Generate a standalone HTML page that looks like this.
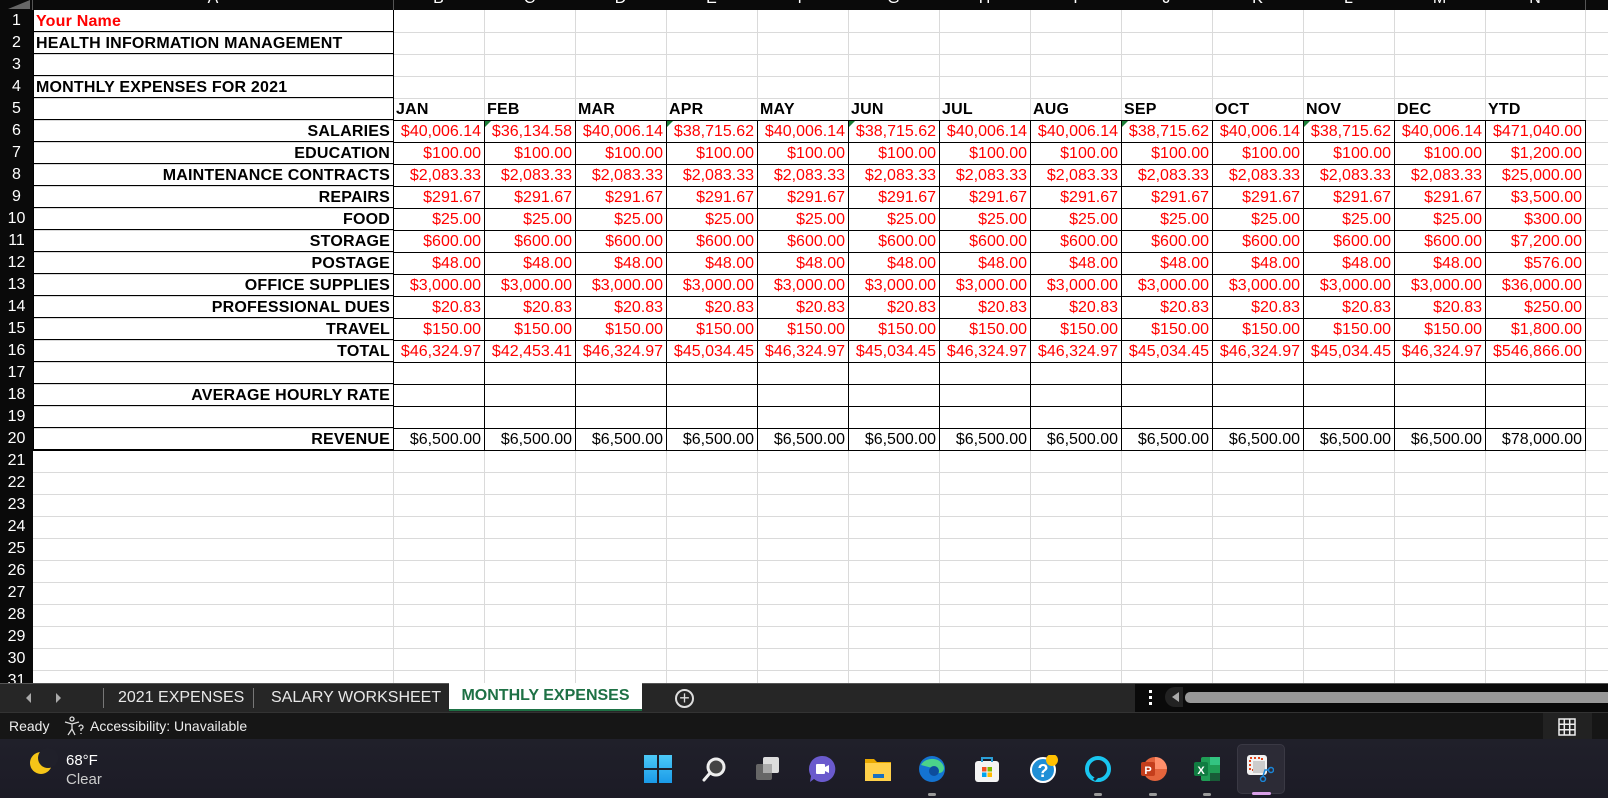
<!DOCTYPE html>
<html><head><meta charset="utf-8"><style>
*{margin:0;padding:0;box-sizing:border-box}
body{width:1608px;height:798px;overflow:hidden;background:#fff;font-family:"Liberation Sans",Arial,sans-serif;position:relative}
.abs{position:absolute}
.vl{position:absolute;width:1px;background:#dadada}
.bv{position:absolute;width:1px;background:#000}
#grid{position:absolute;left:33px;top:11px;width:1575px;height:672px;background:repeating-linear-gradient(to bottom,transparent 0 21px,#dadada 21px 22px)}
table{position:absolute;left:33px;top:10px;border-collapse:collapse;table-layout:fixed;font-size:16px}
tr{height:22px}
td{padding:2px 3px 0 3px;white-space:nowrap;overflow:hidden;line-height:20px}
td.r{text-align:right;color:#f00}
td.k{color:#000}
td.b{font-weight:bold;letter-spacing:0.2px}
.rn{position:absolute;left:0;width:33px;height:22px;color:#fff;font-size:16px;text-align:center;line-height:22px}
.ch{position:absolute;top:-11px;color:#fff;font-size:16px;text-align:center;line-height:20px}
.tri{position:absolute;width:0;height:0;border-top:6px solid #1a7f37;border-right:6px solid transparent}
.tb{position:absolute;top:755px;width:28px;height:28px}
.dot{position:absolute;top:793px;width:8px;height:3px;border-radius:2px;background:#9a9a9a}
</style></head><body>
<div id="grid"></div>
<div class="vl" style="left:393px;top:10px;height:673px"></div>
<div class="vl" style="left:484px;top:10px;height:673px"></div>
<div class="vl" style="left:575px;top:10px;height:673px"></div>
<div class="vl" style="left:666px;top:10px;height:673px"></div>
<div class="vl" style="left:757px;top:10px;height:673px"></div>
<div class="vl" style="left:848px;top:10px;height:673px"></div>
<div class="vl" style="left:939px;top:10px;height:673px"></div>
<div class="vl" style="left:1030px;top:10px;height:673px"></div>
<div class="vl" style="left:1121px;top:10px;height:673px"></div>
<div class="vl" style="left:1212px;top:10px;height:673px"></div>
<div class="vl" style="left:1303px;top:10px;height:673px"></div>
<div class="vl" style="left:1394px;top:10px;height:673px"></div>
<div class="vl" style="left:1485px;top:10px;height:673px"></div>
<div class="vl" style="left:1585px;top:10px;height:673px"></div>
<div class="abs" style="left:33px;top:10px;width:361px;height:441px;border:1px solid #000;border-top:none;background:repeating-linear-gradient(to bottom,transparent 0 21px,#000 21px 22px)"></div>
<div class="abs" style="left:393px;top:120px;width:1193px;height:331px;border:1px solid #000;background:repeating-linear-gradient(to bottom,transparent 0 21px,#000 21px 22px)"></div>
<div class="bv" style="left:484px;top:120px;height:331px"></div>
<div class="bv" style="left:575px;top:120px;height:331px"></div>
<div class="bv" style="left:666px;top:120px;height:331px"></div>
<div class="bv" style="left:757px;top:120px;height:331px"></div>
<div class="bv" style="left:848px;top:120px;height:331px"></div>
<div class="bv" style="left:939px;top:120px;height:331px"></div>
<div class="bv" style="left:1030px;top:120px;height:331px"></div>
<div class="bv" style="left:1121px;top:120px;height:331px"></div>
<div class="bv" style="left:1212px;top:120px;height:331px"></div>
<div class="bv" style="left:1303px;top:120px;height:331px"></div>
<div class="bv" style="left:1394px;top:120px;height:331px"></div>
<div class="bv" style="left:1485px;top:120px;height:331px"></div>
<div class="tri" style="left:485px;top:121px"></div>
<div class="tri" style="left:667px;top:121px"></div>
<div class="tri" style="left:849px;top:121px"></div>
<div class="tri" style="left:1122px;top:121px"></div>
<div class="tri" style="left:1304px;top:121px"></div>

<table>
<colgroup><col style="width:360px"><col style="width:91px"><col style="width:91px"><col style="width:91px"><col style="width:91px"><col style="width:91px"><col style="width:91px"><col style="width:91px"><col style="width:91px"><col style="width:91px"><col style="width:91px"><col style="width:91px"><col style="width:91px"><col style="width:100px"></colgroup>
<tr><td class="b" style="color:#f00">Your Name</td><td colspan="13"></td></tr>
<tr><td class="b">HEALTH INFORMATION MANAGEMENT</td><td colspan="13"></td></tr>
<tr><td></td><td colspan="13"></td></tr>
<tr><td class="b">MONTHLY EXPENSES FOR 2021</td><td colspan="13"></td></tr>
<tr><td></td><td class="b">JAN</td><td class="b">FEB</td><td class="b">MAR</td><td class="b">APR</td><td class="b">MAY</td><td class="b">JUN</td><td class="b">JUL</td><td class="b">AUG</td><td class="b">SEP</td><td class="b">OCT</td><td class="b">NOV</td><td class="b">DEC</td><td class="b">YTD</td></tr>
<tr><td class="b" style="text-align:right">SALARIES</td><td class="r">$40,006.14</td><td class="r">$36,134.58</td><td class="r">$40,006.14</td><td class="r">$38,715.62</td><td class="r">$40,006.14</td><td class="r">$38,715.62</td><td class="r">$40,006.14</td><td class="r">$40,006.14</td><td class="r">$38,715.62</td><td class="r">$40,006.14</td><td class="r">$38,715.62</td><td class="r">$40,006.14</td><td class="r">$471,040.00</td></tr>
<tr><td class="b" style="text-align:right">EDUCATION</td><td class="r">$100.00</td><td class="r">$100.00</td><td class="r">$100.00</td><td class="r">$100.00</td><td class="r">$100.00</td><td class="r">$100.00</td><td class="r">$100.00</td><td class="r">$100.00</td><td class="r">$100.00</td><td class="r">$100.00</td><td class="r">$100.00</td><td class="r">$100.00</td><td class="r">$1,200.00</td></tr>
<tr><td class="b" style="text-align:right">MAINTENANCE CONTRACTS</td><td class="r">$2,083.33</td><td class="r">$2,083.33</td><td class="r">$2,083.33</td><td class="r">$2,083.33</td><td class="r">$2,083.33</td><td class="r">$2,083.33</td><td class="r">$2,083.33</td><td class="r">$2,083.33</td><td class="r">$2,083.33</td><td class="r">$2,083.33</td><td class="r">$2,083.33</td><td class="r">$2,083.33</td><td class="r">$25,000.00</td></tr>
<tr><td class="b" style="text-align:right">REPAIRS</td><td class="r">$291.67</td><td class="r">$291.67</td><td class="r">$291.67</td><td class="r">$291.67</td><td class="r">$291.67</td><td class="r">$291.67</td><td class="r">$291.67</td><td class="r">$291.67</td><td class="r">$291.67</td><td class="r">$291.67</td><td class="r">$291.67</td><td class="r">$291.67</td><td class="r">$3,500.00</td></tr>
<tr><td class="b" style="text-align:right">FOOD</td><td class="r">$25.00</td><td class="r">$25.00</td><td class="r">$25.00</td><td class="r">$25.00</td><td class="r">$25.00</td><td class="r">$25.00</td><td class="r">$25.00</td><td class="r">$25.00</td><td class="r">$25.00</td><td class="r">$25.00</td><td class="r">$25.00</td><td class="r">$25.00</td><td class="r">$300.00</td></tr>
<tr><td class="b" style="text-align:right">STORAGE</td><td class="r">$600.00</td><td class="r">$600.00</td><td class="r">$600.00</td><td class="r">$600.00</td><td class="r">$600.00</td><td class="r">$600.00</td><td class="r">$600.00</td><td class="r">$600.00</td><td class="r">$600.00</td><td class="r">$600.00</td><td class="r">$600.00</td><td class="r">$600.00</td><td class="r">$7,200.00</td></tr>
<tr><td class="b" style="text-align:right">POSTAGE</td><td class="r">$48.00</td><td class="r">$48.00</td><td class="r">$48.00</td><td class="r">$48.00</td><td class="r">$48.00</td><td class="r">$48.00</td><td class="r">$48.00</td><td class="r">$48.00</td><td class="r">$48.00</td><td class="r">$48.00</td><td class="r">$48.00</td><td class="r">$48.00</td><td class="r">$576.00</td></tr>
<tr><td class="b" style="text-align:right">OFFICE SUPPLIES</td><td class="r">$3,000.00</td><td class="r">$3,000.00</td><td class="r">$3,000.00</td><td class="r">$3,000.00</td><td class="r">$3,000.00</td><td class="r">$3,000.00</td><td class="r">$3,000.00</td><td class="r">$3,000.00</td><td class="r">$3,000.00</td><td class="r">$3,000.00</td><td class="r">$3,000.00</td><td class="r">$3,000.00</td><td class="r">$36,000.00</td></tr>
<tr><td class="b" style="text-align:right">PROFESSIONAL DUES</td><td class="r">$20.83</td><td class="r">$20.83</td><td class="r">$20.83</td><td class="r">$20.83</td><td class="r">$20.83</td><td class="r">$20.83</td><td class="r">$20.83</td><td class="r">$20.83</td><td class="r">$20.83</td><td class="r">$20.83</td><td class="r">$20.83</td><td class="r">$20.83</td><td class="r">$250.00</td></tr>
<tr><td class="b" style="text-align:right">TRAVEL</td><td class="r">$150.00</td><td class="r">$150.00</td><td class="r">$150.00</td><td class="r">$150.00</td><td class="r">$150.00</td><td class="r">$150.00</td><td class="r">$150.00</td><td class="r">$150.00</td><td class="r">$150.00</td><td class="r">$150.00</td><td class="r">$150.00</td><td class="r">$150.00</td><td class="r">$1,800.00</td></tr>
<tr><td class="b" style="text-align:right">TOTAL</td><td class="r">$46,324.97</td><td class="r">$42,453.41</td><td class="r">$46,324.97</td><td class="r">$45,034.45</td><td class="r">$46,324.97</td><td class="r">$45,034.45</td><td class="r">$46,324.97</td><td class="r">$46,324.97</td><td class="r">$45,034.45</td><td class="r">$46,324.97</td><td class="r">$45,034.45</td><td class="r">$46,324.97</td><td class="r">$546,866.00</td></tr>
<tr><td></td><td colspan="13"></td></tr>
<tr><td class="b" style="text-align:right">AVERAGE HOURLY RATE</td><td colspan="13"></td></tr>
<tr><td></td><td colspan="13"></td></tr>
<tr><td class="b" style="text-align:right">REVENUE</td><td class="r k">$6,500.00</td><td class="r k">$6,500.00</td><td class="r k">$6,500.00</td><td class="r k">$6,500.00</td><td class="r k">$6,500.00</td><td class="r k">$6,500.00</td><td class="r k">$6,500.00</td><td class="r k">$6,500.00</td><td class="r k">$6,500.00</td><td class="r k">$6,500.00</td><td class="r k">$6,500.00</td><td class="r k">$6,500.00</td><td class="r k">$78,000.00</td></tr>
</table>

<div class="abs" style="left:0;top:0;width:1608px;height:10px;background:#0a0a0a;overflow:hidden">
<div class="abs" style="top:0;width:0;height:0;border-bottom:9px solid #666;border-left:22px solid transparent;left:8px"></div>
<div class="ch" style="left:33px;width:360px">A</div>
<div class="ch" style="left:393px;width:91px">B</div>
<div class="ch" style="left:484px;width:91px">C</div>
<div class="ch" style="left:575px;width:91px">D</div>
<div class="ch" style="left:666px;width:91px">E</div>
<div class="ch" style="left:757px;width:91px">F</div>
<div class="ch" style="left:848px;width:91px">G</div>
<div class="ch" style="left:939px;width:91px">H</div>
<div class="ch" style="left:1030px;width:91px">I</div>
<div class="ch" style="left:1121px;width:91px">J</div>
<div class="ch" style="left:1212px;width:91px">K</div>
<div class="ch" style="left:1303px;width:91px">L</div>
<div class="ch" style="left:1394px;width:91px">M</div>
<div class="ch" style="left:1485px;width:100px">N</div>
<div class="abs" style="left:32px;top:0;width:1px;height:10px;background:#555"></div>
<div class="abs" style="left:393px;top:0;width:1px;height:10px;background:#555"></div>
<div class="abs" style="left:1585px;top:0;width:1px;height:10px;background:#555"></div>
</div>
<div class="abs" style="left:0;top:10px;width:33px;height:673px;background:#0a0a0a;overflow:hidden">
<div class="rn" style="top:0">1</div><div class="rn" style="top:22px">2</div><div class="rn" style="top:44px">3</div><div class="rn" style="top:66px">4</div><div class="rn" style="top:88px">5</div><div class="rn" style="top:110px">6</div><div class="rn" style="top:132px">7</div><div class="rn" style="top:154px">8</div><div class="rn" style="top:176px">9</div><div class="rn" style="top:198px">10</div><div class="rn" style="top:220px">11</div><div class="rn" style="top:242px">12</div><div class="rn" style="top:264px">13</div><div class="rn" style="top:286px">14</div><div class="rn" style="top:308px">15</div><div class="rn" style="top:330px">16</div><div class="rn" style="top:352px">17</div><div class="rn" style="top:374px">18</div><div class="rn" style="top:396px">19</div><div class="rn" style="top:418px">20</div><div class="rn" style="top:440px">21</div><div class="rn" style="top:462px">22</div><div class="rn" style="top:484px">23</div><div class="rn" style="top:506px">24</div><div class="rn" style="top:528px">25</div><div class="rn" style="top:550px">26</div><div class="rn" style="top:572px">27</div><div class="rn" style="top:594px">28</div><div class="rn" style="top:616px">29</div><div class="rn" style="top:638px">30</div><div class="rn" style="top:660px">31</div>
</div>

<div class="abs" style="left:0;top:683px;width:1608px;height:29px;background:#262626;border-top:1px solid #555;color:#e8e8e8;font-size:16px">
<div class="abs" style="left:26px;top:9px;width:0;height:0;border-right:5px solid #aaa;border-top:5px solid transparent;border-bottom:5px solid transparent"></div>
<div class="abs" style="left:56px;top:9px;width:0;height:0;border-left:5px solid #aaa;border-top:5px solid transparent;border-bottom:5px solid transparent"></div>
<div class="abs" style="left:103px;top:4px;width:1px;height:20px;background:#777"></div>
<div class="abs" style="left:118px;top:4px;line-height:20px">2021 EXPENSES</div>
<div class="abs" style="left:253px;top:4px;width:1px;height:20px;background:#777"></div>
<div class="abs" style="left:271px;top:4px;line-height:20px">SALARY WORKSHEET</div>
<div class="abs" style="left:449px;top:-1px;width:193px;height:28px;background:#fff;border-bottom:2px solid #1e7145;color:#1e7145;font-weight:bold;text-align:center;line-height:26px">MONTHLY EXPENSES</div>
<div class="abs" style="left:675px;top:5px;width:19px;height:19px;border:2px solid #ddd;border-radius:50%;text-align:center;line-height:14px;font-size:18px;color:#ddd">+</div>
<div class="abs" style="left:1135px;top:0;width:29px;height:28px;background:#0a0a0a"></div>
<div class="abs" style="left:1149px;top:6px;width:3px;height:3px;background:#fff;box-shadow:0 6px #fff,0 12px #fff"></div>
<div class="abs" style="left:1164px;top:0;width:444px;height:28px;background:#0a0a0a"></div>
<div class="abs" style="left:1165px;top:3px;width:18px;height:20px;background:#222;border-radius:10px 0 0 10px"></div>
<div class="abs" style="left:1172px;top:8px;width:0;height:0;border-right:7px solid #aaa;border-top:5px solid transparent;border-bottom:5px solid transparent"></div>
<div class="abs" style="left:1185px;top:8px;width:423px;height:11px;background:#989898;border-radius:5px 0 0 5px"></div>
</div>
<div class="abs" style="left:0;top:712px;width:1608px;height:27px;background:#161616;border-top:1px solid #333;color:#eee;font-size:14px">
<div class="abs" style="left:9px;top:4px;line-height:18px">Ready</div>
<svg class="abs" style="left:62px;top:3px" width="26" height="20" viewBox="0 0 26 20"><g fill="none" stroke="#ddd" stroke-width="1.3"><circle cx="10" cy="3" r="2"/><path d="M3 6l7 2 7-2M10 8v5l-4 6M10 13l3 6"/><path d="M17 11a2 2 0 1 1 2 2v2M19 17v1"/></g></svg>
<div class="abs" style="left:90px;top:4px;line-height:18px">Accessibility: Unavailable</div>
<div class="abs" style="left:1543px;top:0;width:49px;height:27px;background:#222"></div>
<svg class="abs" style="left:1558px;top:5px" width="18" height="18" viewBox="0 0 18 18"><g stroke="#eee" stroke-width="1.5" fill="none"><rect x="1" y="1" width="16" height="16"/><path d="M6.3 1v16M11.7 1v16M1 6.3h16M1 11.7h16"/></g></svg>
</div>
<div class="abs" style="left:0;top:739px;width:1608px;height:59px;background:linear-gradient(#20202a,#1c1b26);color:#fff">
<div class="abs" style="left:30px;top:13px;width:22px;height:22px;border-radius:50%;background:#f5c518"></div>
<div class="abs" style="left:38px;top:9px;width:20px;height:20px;border-radius:50%;background:#20202a"></div>
<div class="abs" style="left:66px;top:13px;font-size:15px;line-height:17px">68°F</div>
<div class="abs" style="left:66px;top:32px;font-size:15px;line-height:17px;color:#ccc">Clear</div>
</div>
<div class="tb" style="left:644px;top:755px;width:28px;height:28px;background:linear-gradient(#4cc9f7,#1a9ae8)"></div>
<div class="abs" style="left:644px;top:768px;width:28px;height:2px;background:#1f1e29"></div>
<div class="abs" style="left:657px;top:755px;width:2px;height:28px;background:#1f1e29"></div>
<svg class="tb" style="left:700px" viewBox="0 0 28 28"><circle cx="16" cy="12" r="8" fill="#444" stroke="#eee" stroke-width="3"/><path d="M10 18l-6 7" stroke="#eee" stroke-width="3" stroke-linecap="round"/></svg>
<svg class="tb" style="left:754px" viewBox="0 0 28 28"><rect x="2" y="9" width="16" height="16" rx="2" fill="#666"/><rect x="9" y="2" width="16" height="16" rx="2" fill="#ddd"/><rect x="9" y="9" width="9" height="9" fill="#aaa"/></svg>
<svg class="tb" style="left:808px" viewBox="0 0 28 28"><path d="M14 1a13 13 0 1 1-8 23l-4 3 1-6A13 13 0 0 1 14 1z" fill="#6a5acd"/><rect x="8" y="9" width="9" height="10" rx="1" fill="#fff"/><path d="M17 12l4-2v8l-4-2z" fill="#fff"/></svg>
<svg class="tb" style="left:864px" viewBox="0 0 28 28"><path d="M1 4h9l3 3h14v19H1z" fill="#e8a800"/><rect x="1" y="8" width="26" height="18" fill="#ffd04a"/><rect x="9" y="19" width="11" height="4" fill="#1a70c0"/></svg>
<svg class="tb" style="left:918px" viewBox="0 0 28 28"><circle cx="14" cy="14" r="13" fill="#1473d1"/><path d="M3 10a12 10 0 0 1 23 3c0 4-4 6-8 5-4-1-3-4 0-4" fill="#4cd28a"/><circle cx="16" cy="16" r="5" fill="#0d4d9c"/></svg>
<svg class="tb" style="left:973px" viewBox="0 0 28 28"><rect x="2" y="6" width="24" height="21" rx="3" fill="#f4f4f4"/><path d="M9 7V3h10v4" stroke="#2a9fd8" stroke-width="2" fill="none"/><rect x="9" y="12" width="4.5" height="4.5" fill="#f25022"/><rect x="14.5" y="12" width="4.5" height="4.5" fill="#7fba00"/><rect x="9" y="17.5" width="4.5" height="4.5" fill="#00a4ef"/><rect x="14.5" y="17.5" width="4.5" height="4.5" fill="#ffb900"/></svg>
<svg class="tb" style="left:1030px" viewBox="0 0 28 28"><circle cx="13" cy="15" r="12" fill="#1e8fd6" stroke="#fff" stroke-width="2"/><text x="13" y="22" font-size="18" font-weight="bold" fill="#fff" text-anchor="middle" font-family="Liberation Sans">?</text><circle cx="22" cy="5" r="6" fill="#ffc000"/></svg>
<svg class="tb" style="left:1084px" viewBox="0 0 28 28"><circle cx="14" cy="14" r="11" fill="none" stroke="#19c6f0" stroke-width="4"/><path d="M10 25l4-4" stroke="#1f1e29" stroke-width="3"/></svg>
<svg class="tb" style="left:1139px" viewBox="0 0 28 28"><circle cx="16" cy="14" r="12" fill="#e4643c"/><path d="M16 2a12 12 0 0 1 12 12H16z" fill="#ff8f6b"/><rect x="2" y="7" width="14" height="14" rx="2" fill="#c43e1c"/><text x="9" y="19" font-size="11" font-weight="bold" fill="#fff" text-anchor="middle" font-family="Liberation Sans">P</text></svg>
<svg class="tb" style="left:1193px" viewBox="0 0 28 28"><rect x="8" y="2" width="19" height="24" rx="2" fill="#1f9d55"/><rect x="17" y="2" width="10" height="8" fill="#33c481"/><rect x="17" y="18" width="10" height="8" fill="#185c37"/><rect x="1" y="7" width="14" height="14" rx="2" fill="#107c41"/><text x="8" y="19" font-size="11" font-weight="bold" fill="#fff" text-anchor="middle" font-family="Liberation Sans">X</text></svg>
<div class="abs" style="left:1237px;top:744px;width:48px;height:50px;border-radius:5px;background:#2c2b36;border:1px solid #3a3944"></div>
<svg class="tb" style="left:1246px;top:754px" viewBox="0 0 28 28"><rect x="1" y="1" width="20" height="20" rx="3" fill="#f2f2f2"/><rect x="4" y="4" width="12" height="12" fill="none" stroke="#e0431a" stroke-width="2" stroke-dasharray="2 2"/><rect x="7" y="7" width="12" height="12" fill="#ccc"/><circle cx="25" cy="16" r="2.5" fill="none" stroke="#1a86d8" stroke-width="1.5"/><circle cx="17" cy="25" r="2.5" fill="none" stroke="#1a86d8" stroke-width="1.5"/><path d="M17 22l2-6 4 0" stroke="#1a86d8" stroke-width="1.5" fill="none"/></svg>
<div class="dot" style="left:928px"></div>
<div class="dot" style="left:1094px"></div>
<div class="dot" style="left:1149px"></div>
<div class="dot" style="left:1203px"></div>
<div class="abs" style="left:1252px;top:792px;width:19px;height:3px;border-radius:2px;background:#d9a0e8"></div>
</body></html>
